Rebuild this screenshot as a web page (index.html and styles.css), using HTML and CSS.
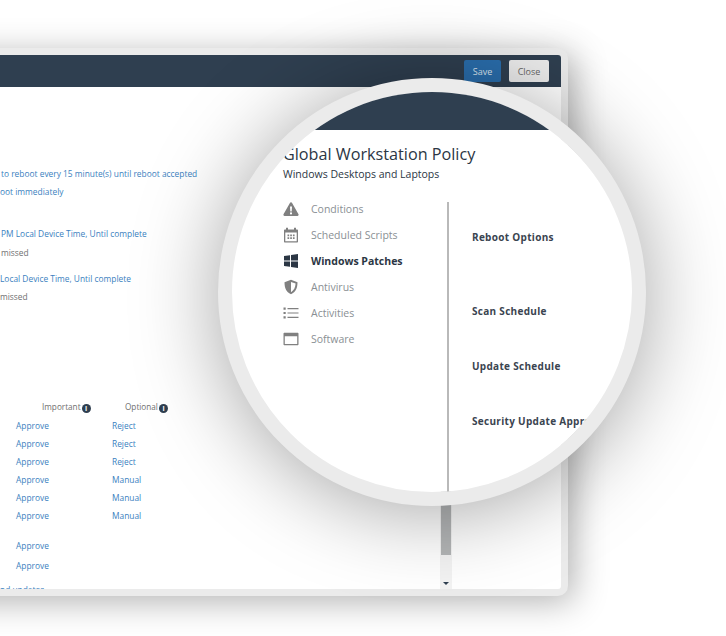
FILE: index.html
```html
<!DOCTYPE html>
<html lang="en">
<head>
<meta charset="utf-8">
<title>Global Workstation Policy</title>
<link rel="stylesheet" href="styles.css">
</head>
<body>
<div class="stage">
  <section class="window">
    <header class="win-head">
      <button class="btn btn-save">Save</button>
      <button class="btn btn-close">Close</button>
    </header>
    <div class="win-body">
      <div class="content">
        <p class="line link first">to reboot every 15 minute(s) until reboot accepted</p>
        <p class="line link">oot immediately</p>
        <p class="line link gap-a">PM Local Device Time, Until complete</p>
        <p class="line muted gap-b">missed</p>
        <p class="line link gap-c">Local Device Time, Until complete</p>
        <p class="line muted">missed</p>
        <div class="row head">
          <span class="col-a">Important <i class="info">i</i></span>
          <span class="col-b">Optional <i class="info">i</i></span>
        </div>
        <div class="row link tight"><span class="col-c">Approve</span><span class="col-d">Reject</span></div>
        <div class="row link"><span class="col-c">Approve</span><span class="col-d">Reject</span></div>
        <div class="row link"><span class="col-c">Approve</span><span class="col-d">Reject</span></div>
        <div class="row link"><span class="col-c">Approve</span><span class="col-d">Manual</span></div>
        <div class="row link"><span class="col-c">Approve</span><span class="col-d">Manual</span></div>
        <div class="row link"><span class="col-c">Approve</span><span class="col-d">Manual</span></div>
        <div class="row link gap-d"><span class="col-c">Approve</span></div>
        <div class="row link gap-e"><span class="col-c">Approve</span></div>
        <p class="line link gap-f">nd updates</p>
      </div>
      <div class="scrollbar">
        <div class="thumb"></div>
        <div class="arrow"></div>
      </div>
    </div>
  </section>

  <section class="lens">
    <div class="lens-head"></div>
    <div class="lens-body">
      <h1 class="title">Global Workstation Policy</h1>
      <p class="subtitle">Windows Desktops and Laptops</p>
      <div class="panes">
        <ul class="menu">
          <li class="item">
            <svg class="icon" viewBox="0 0 16 16"><path fill-rule="evenodd" d="M8 1.2c.5 0 .9.3 1.1.7l6.4 11.4c.4.8-.1 1.600-1 1.600H1.500c-.9 0-1.400-.8-1-1.600L6.900 1.900c.2-.4.6-.7 1.100-.7zM7 5.500l.3 5h1.400l.3-5zM8 11.300a1.100 1.100 0 1 0 0 2.200 1.100 1.100 0 0 0 0-2.200z"/></svg>
            Conditions
          </li>
          <li class="item">
            <svg class="icon" viewBox="0 0 16 16"><path fill-rule="evenodd" d="M3 .8h2V2.500h6V.8h2v1.700h1c.6 0 1 .4 1 1V14.500c0 .6-.4 1-1 1H2c-.6 0-1-.4-1-1V3.500c0-.6.4-1 1-1h1zM2.300 5.500v8.700h11.400V5.500zM4.500 7.500h1.700v1.700H4.500zM7.200 7.500h1.700v1.700H7.200zM9.900 7.500h1.700v1.700H9.900zM4.500 10.300h1.700V12H4.500zM7.200 10.300h1.700V12H7.200zM9.900 10.300h1.700V12H9.900z"/></svg>
            Scheduled Scripts
          </li>
          <li class="item active">
            <svg class="icon" viewBox="0 0 16 16"><path d="M1 3.100l6-.9v5.400H1zM8 2l7-1v6.600H8zM1 8.500h6v5.300l-6-.9zM8 8.500h7V15l-7-1z"/></svg>
            Windows Patches
          </li>
          <li class="item">
            <svg class="icon" viewBox="0 0 16 16"><path fill-rule="evenodd" d="M8 .8l6.500 2.400c0 5.500-1.600 9.800-6.500 12C3.100 13 1.500 8.700 1.500 3.200zM8 3v10.200c3-1.700 4.300-4.700 4.600-8.600z"/></svg>
            Antivirus
          </li>
          <li class="item">
            <svg class="icon" viewBox="0 0 16 16"><path d="M.5 2.500h2.200v2.200H.5zM.5 6.900h2.200v2.200H.5zM.5 11.300h2.200v2.200H.5zM4.500 3h11v1.200h-11zM4.500 7.400h11v1.200h-11zM4.500 11.800h11V13h-11z"/></svg>
            Activities
          </li>
          <li class="item">
            <svg class="icon" viewBox="0 0 16 16"><path fill-rule="evenodd" d="M1.500 1.800h13c.6 0 1 .4 1 1v10.400c0 .6-.4 1-1 1h-13c-.6 0-1-.4-1-1V2.800c0-.6.4-1 1-1zM1.800 5.200v7.700h12.400V5.200z"/></svg>
            Software
          </li>
        </ul>
        <div class="sections">
          <h2 class="sec sec-1">Reboot Options</h2>
          <h2 class="sec sec-2">Scan Schedule</h2>
          <h2 class="sec sec-3">Update Schedule</h2>
          <h2 class="sec sec-3">Security Update Approvals</h2>
        </div>
      </div>
    </div>
  </section>
</div>
</body>
</html>
```
FILE: styles.css
```css
* { box-sizing: border-box; }
html, body { margin: 0; padding: 0; background: #fff; }
body { font-family: "Open Sans", "Liberation Sans", sans-serif; }

.stage {
  position: relative;
  width: 726px;
  height: 636px;
  overflow: hidden;
  padding-top: 48px;
}

/* Background application window */
.window {
  width: 768px;
  height: 548px;
  margin-left: -200px;
  border: 7px solid #ebebeb;
  border-radius: 10px;
  background: #fff;
  box-shadow: 6px 6px 34px rgba(0, 0, 0, .3);
  overflow: hidden;
  display: flex;
  flex-direction: column;
}
.win-head {
  height: 32px;
  flex: none;
  background: #2f3f50;
  display: flex;
  align-items: center;
  justify-content: flex-end;
  gap: 8px;
  padding-right: 12px;
}
.btn {
  height: 22px;
  padding: 0;
  border: 0;
  border-radius: 2px;
  font: 9px "Open Sans", sans-serif;
}
.btn-save { width: 37px; background: #2a6ead; color: #dfe8f2; }
.btn-close { width: 40px; background: #ececec; color: #666; }

.win-body { flex: 1; display: flex; min-height: 0; padding-right: 109px; overflow: hidden; }
.content {
  flex: 1;
  padding: 78px 0 0 193px;
  font-size: 8.4px;
  line-height: 18px;
  color: #666;
}
.line { margin: 0; white-space: nowrap; }
.link { color: #3b7fc0; }
.muted { color: #707070; }
.line.first { padding-left: 1px; }
.gap-a { margin-top: 24px; padding-left: 1px; }
.gap-b { margin-top: 1px; padding-left: 1px; }
.gap-c { margin-top: 8px; }
.row { display: flex; height: 18px; white-space: nowrap; }
.row.head { margin-top: 92px; color: #707070; font-size: 8.2px; }
.row.tight { margin-top: 1px; }
.gap-d { margin-top: 12px; }
.gap-e { margin-top: 2px; }
.gap-f { margin-top: 6px; }
.col-a { margin-left: 42px; width: 83px; }
.col-c { margin-left: 16px; width: 96px; }
.info {
  display: inline-block;
  width: 9px;
  height: 9px;
  margin-left: -1px;
  border-radius: 50%;
  background: #2f3f50;
  color: #fff;
  font: bold 7px/9px "Open Sans", sans-serif;
  text-align: center;
  vertical-align: -1px;
}

.scrollbar {
  flex: none;
  width: 12px;
  background: #f3f3f3;
  padding: 0 1px;
  display: flex;
  flex-direction: column;
  justify-content: flex-end;
}
.thumb { height: 468px; margin-bottom: 27px; background: #b4b6b7; flex: none; }
.arrow {
  align-self: center;
  flex: none;
  width: 0;
  height: 0;
  margin-bottom: 4px;
  border-left: 3px solid transparent;
  border-right: 3px solid transparent;
  border-top: 3px solid #2f3f50;
}

/* Magnifying lens */
.lens {
  position: absolute;
  left: 218px;
  top: 78px;
  width: 428px;
  height: 428px;
  border: 14px solid #ebebeb;
  border-radius: 50%;
  background: #fff;
  background-clip: padding-box;
  box-shadow: 0 6px 85px rgba(0, 0, 0, .36);
}
.lens-head { position: absolute; inset: 0; height: 38px; background: #2f3f50; clip-path: circle(200px at 200px 200px); }
.lens-body { padding: 38px 0 0 51px; height: 400px; position: relative; overflow: hidden; border-radius: 50%; }
.title { margin: 12px 0 0; font-size: 16.2px; line-height: 24px; font-weight: 400; color: #2b3644; white-space: nowrap; }
.subtitle { margin: 0; font-size: 10.5px; line-height: 16px; color: #2b3644; white-space: nowrap; }
.panes { display: flex; margin-top: 20px; height: 290px; }
.menu { list-style: none; margin: 0; padding: 0; width: 166px; flex: none; border-right: 2px solid #b9b9b9; }
.item {
  display: flex;
  align-items: center;
  height: 26px;
  gap: 12px;
  font-size: 10.5px;
  color: #8a8f94;
}
.item:first-child { margin-top: -6px; }
.icon { width: 16px; height: 16px; fill: #808080; flex: none; }
.item.active { color: #2b3644; font-weight: 700; }
.item.active .icon { fill: #2b3644; }
.sections { padding-left: 23px; }
.sec { margin: 0; font-size: 10px; line-height: 16px; font-weight: 700; color: #3a4450; white-space: nowrap; letter-spacing: .3px; }
.sec-1 { margin-top: 27px; }
.sec-2 { margin-top: 58px; }
.sec-3 { margin-top: 39px; }
```
